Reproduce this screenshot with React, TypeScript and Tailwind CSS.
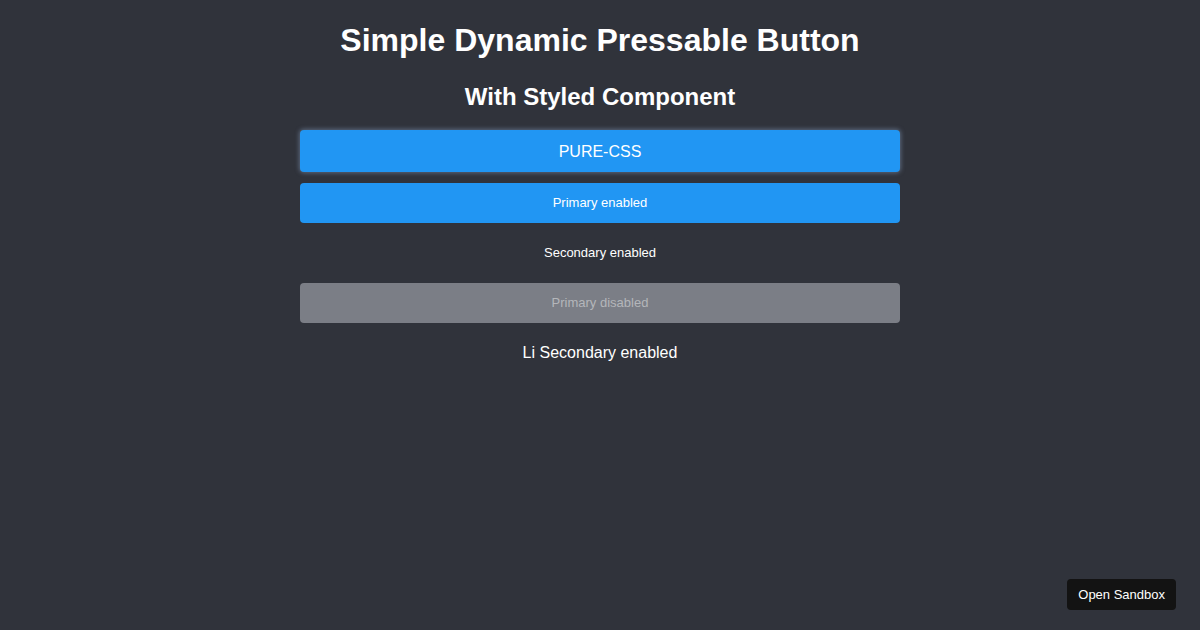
export default function App() {
  return (
    <div className="relative w-full h-[630px] bg-[#30333b] text-white font-['Liberation_Sans',Arial,sans-serif] overflow-hidden">
      <div className="flex flex-col items-center">
        <h1 className="mt-[21px] text-[32px] leading-[38px] font-bold">Simple Dynamic Pressable Button</h1>
        <h2 className="mt-[24px] text-[24px] leading-[28px] font-bold">With Styled Component</h2>
        <div className="mt-[19px] w-[600px] flex flex-col">
          <button type="button" className="h-[42px] w-full rounded bg-[#2196f3] pt-[2px] text-[16px] text-white shadow-[0_0_4px_1px_rgba(120,140,170,0.6)]">
            PURE-CSS
          </button>
          <button type="button" className="mt-[11px] h-[40px] w-full rounded bg-[#2196f3] text-[13px] text-white">
            Primary enabled
          </button>
          <button type="button" className="mt-[10px] h-[40px] w-full rounded text-[13px] text-white">
            Secondary enabled
          </button>
          <button type="button" disabled className="mt-[10px] h-[40px] w-full rounded bg-[#7b7e86] text-[13px] text-[#b4b6ba]">
            Primary disabled
          </button>
          <button type="button" className="mt-[10px] h-[40px] w-full text-[16px] text-white">
            Li Secondary enabled
          </button>
        </div>
      </div>
      <button type="button" className="absolute right-[24px] bottom-[20px] h-[31px] px-[11px] rounded bg-[#131313] text-[13px] text-white">
        Open Sandbox
      </button>
    </div>
  );
}
